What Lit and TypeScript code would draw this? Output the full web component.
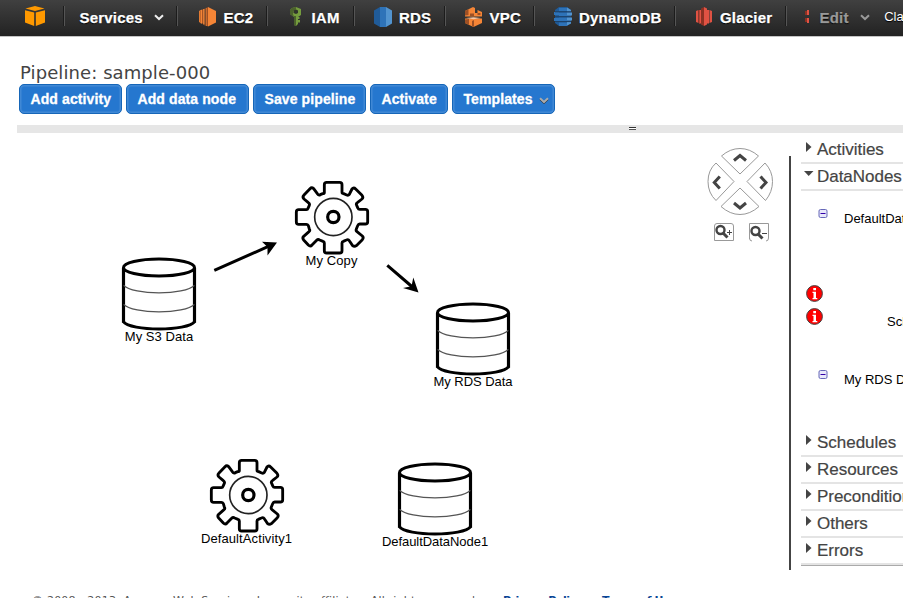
import { LitElement, html, css, svg } from "lit";
import { customElement, property } from "lit/decorators.js";
import { styleMap } from "lit/directives/style-map.js";

const chevron = (color: string, under = "none") => html`<svg width="10" height="7" viewBox="0 0 10 7">
  <path d="M1 2.200L5 6L9 2.200" fill="none" stroke=${under} stroke-width="1.500" />
  <path d="M1 1.2L5 5L9 1.2" fill="none" stroke=${color} stroke-width="2" />
</svg>`;

const icons: Record<string, unknown> = {
  ec2: svg`<path d="M0 4L3 2.5V16.500L0 15z" fill="#f58536"/><path d="M1.300 3.500v12M3.500 2.500v14M6 1.500v17" stroke="#9d5025" stroke-width="1"/>
    <path d="M2.400 3v13.500M4.800 2v15.500M7.500 1v18" stroke="#f58536" stroke-width="1.400"/><path d="M9 0L17 4V15.500L9 19.500z" fill="#f58536"/><path d="M7.500 0.800L9 0V19.500L7.500 18.800z" fill="#9d5025"/>`,
  iam: svg`<path d="M2 1L6 0L11 2V8L8 10V17L6 19L4 18V10L0 7V3z" fill="#759c3e"/><path d="M0 3L2 1L6 0V2.500L3 4V7L4 10L0 7zM6 9L4 9V18L6 19z" fill="#4b612c"/><path d="M3.500 3.500L6 2.500L8 3.500V6L6 7L3.500 6z" fill="#30332b"/><path d="M8 10h1.500v2H8zM8 13h2v2.500H8z" fill="#759c3e"/>`,
  rds: svg`<path d="M0 3.500L6 0V20L0 16.500z" fill="#205b98"/><path d="M6 0H12V20H6z" fill="#2e73b8"/><path d="M12 0L18 3.500V16.500L12 20z" fill="#5294cf"/>`,
  vpc: svg`<path d="M0 4L8 0L10 1V6H12.500V3L17 5V9.500H0z" fill="#f58536"/><path d="M0 4L3.500 2.300V8L0 8.500zM5 6.500h4v2.500H5zM12.500 6h3v2h-3z" fill="#9d5025"/><path d="M0 11.500H17V16L8.500 20L0 16z" fill="#f58536"/><path d="M0 12.500L4 12V18L0 16zM7 14l2-1v7l-2-1z" fill="#9d5025"/><path d="M1 11L8.500 12.200L16 11L8.500 10.200z" fill="#fac9a6"/>`,
  dynamo: svg`<path d="M1 3L5 0H13L17 3V16L13 19H5L1 16z" fill="#205b98"/>
    <path d="M0 5H5V8H0zM0 11H5V14H0zM5 1H13V4H5z" fill="#2e73b8"/><path d="M5 5.500H13V9H5zM5 10.500H13V14H5zM5 15.500H13V19H5z" fill="#2e73b8"/>
    <path d="M13 0.500L17 3V4.500H13zM13 5.500H18V8.500H13zM13 10.500H18V13.500H13zM13 15H17V16.500L13 18.500z" fill="#5294cf"/>
    <path d="M1 4.800H17M1 9.700H17M1 14.600H17" stroke="#1d3f63" stroke-width="1"/>`,
  glacier: svg`<path d="M0 4L2.500 3V16L0 15zM3 3h2.500v13.500H3zM11 3h2v13.500h-2zM13.500 3L16 4V15L13.500 16z" fill="#e05243"/><path d="M2.500 3h1v13h-1z" fill="#8c3123"/><path d="M5 1.500L8 0V19L5 17.500z" fill="#8c3123"/><path d="M8 0L11 1.500V17.500L8 19z" fill="#e05243"/>`,
  mini: svg`<path d="M0 1h2v4H0zM0 8h2v4H0z" fill="#8c3123"/><path d="M2 0h2v5H2zM2 8h2v5H2z" fill="#e05243"/>`,
};

interface NavItem { icon: string; label: string; w: number; iw: number; pad: number; gap: number }
const navItems: NavItem[] = [
  { icon: "ec2", label: "EC2", w: 90, iw: 17, pad: 21, gap: 7.500 },
  { icon: "iam", label: "IAM", w: 87, iw: 12, pad: 22, gap: 9.500 },
  { icon: "rds", label: "RDS", w: 91, iw: 18, pad: 19, gap: 7 },
  { icon: "vpc", label: "VPC", w: 89, iw: 17, pad: 19, gap: 7.500 },
  { icon: "dynamo", label: "DynamoDB", w: 141, iw: 18, pad: 18.500, gap: 7.500 },
  { icon: "glacier", label: "Glacier", w: 111, iw: 16, pad: 19.500, gap: 8.500 },
];

@customElement("console-nav")
export class ConsoleNav extends LitElement {
  static styles = css`
    :host { display: flex; height: 36px; flex: none; overflow: hidden; border-bottom: 1px solid #c4c4c4;
      background: linear-gradient(#404040, #222); color: #fff; font: bold 15px "Liberation Sans", Arial, sans-serif; letter-spacing: .2px;
      -webkit-text-stroke: .25px; text-shadow: 0 1px 1px #000; }
    .cell { box-sizing: border-box; flex: none; height: 36px; display: flex; align-items: center; position: relative; white-space: nowrap; padding-bottom: 2px; }
    .cell.ruled::after { content: ""; position: absolute; right: 0; top: 6px; width: 1px; height: 20px; background: #555; border-left: 1px solid #1c1c1c; }
    .logo { width: 65px; padding: 0 0 4px 25px; }
    .services { width: 113px; padding-left: 14.500px; gap: 11px; }
    .edit { padding-left: 17.500px; color: #999; gap: 11px; }
    .edit .label { margin-left: -1px; }
    .user { padding: 0 0 4px 14.500px; font-weight: normal; font-size: 13px; letter-spacing: 0; -webkit-text-stroke: 0; }
    .label { padding-top: 1px; }
    .icon { overflow: visible; margin-bottom: 1px; flex: none; }
  `;
  render() {
    return html`
      <div class="cell logo ruled"><svg width="20" height="20" viewBox="0 0 20 20">
        <path d="M0.500 2.500L10 0L19.500 2.500L10 5z" fill="#ff9900"/><path d="M0 4.200L9.200 6.600V20L0 16.500zM20 4.200L10.800 6.600V20L20 16.500z" fill="#ff9900"/></svg></div>
      <div class="cell services ruled"><span class="label">Services</span>${chevron("#eee")}</div>
      ${navItems.map((n) => html`<div class="cell ruled" style=${styleMap({ width: `${n.w}px`, paddingLeft: `${n.pad}px`, gap: `${n.gap}px` })}>
        <svg class="icon" width=${n.iw} height="20">${icons[n.icon]}</svg><span class="label">${n.label}</span></div>`)}
      <div class="cell edit"><svg class="icon" width="5" height="13">${icons.mini}</svg><span class="label">Edit</span>${chevron("#999")}</div>
      <div class="cell user">Classmethod</div>`;
  }
}

@customElement("pipeline-node")
export class PipelineNode extends LitElement {
  @property() kind = "data";
  @property() label = "";
  static styles = css`
    :host { display: flex; flex-direction: column; align-items: center; width: 74px; }
    svg { display: block; flex: none; overflow: visible; }
    .name { white-space: nowrap; line-height: 15px; margin-top: -2px; }
    .name.activity { margin-top: -1px; }
  `;
  render() {
    const gear = svg`<g fill="none" stroke="#000" stroke-linejoin="round">
      <path stroke-width="8.500" d="M88 35V11Q88 4 95 4H134Q141 4 141 11V34Q141 38 146 38L155 42Q160 44 163 40L171 24Q176 18 182 24L201 43Q206 49 201 54L188 64Q182 68 185 73L189 82Q190 85 194 85H211Q218 85 218 92V122Q218 129 211 129H194Q190 129 188 134L184 144Q182 149 186 152L202 165Q207 170 202 176L184 194Q178 198 172 193L163 179Q160 174 154 177L145 181Q141 182 141 186V209Q141 216 134 216H95Q88 216 88 209V186Q88 182 84 181L74 177Q69 174 65 178L51 192Q46 198 40 192L26 177Q21 171 26 166L42 152Q46 149 43 144L40 134Q38 130 34 130H11Q4 130 4 123V93Q4 86 11 86H34Q38 86 39 82L43 73Q45 69 40 65L27 54Q21 48 27 42L45 23Q50 18 56 23L67 38Q71 44 76 41L83 38Q88 38 88 35Z"/>
      <circle cx="115" cy="108" r="56" stroke-width="5" stroke="#222"/><circle cx="115" cy="108" r="17" stroke-width="9.500"/></g>`;
    const cylinder = svg`<g fill="none" stroke="#000">
      <ellipse cx="111" cy="28.500" rx="106.500" ry="25.500" stroke-width="9"/>
      <path stroke-width="9.500" d="M4.500 29V194M217.500 29V194"/>
      <path stroke-width="9" d="M4 191C24 220 198 220 218 191"/>
      <path stroke-width="4" stroke="#555" d="M5 82C32 112 190 112 217 82M5 139C32 169 190 169 217 139"/></g>`;
    return html`<svg width="74" height="73" viewBox="0 0 222 219">${this.kind === "activity" ? gear : cylinder}</svg>
      <span class="name ${this.kind}">${this.label}</span>`;
  }
}

const nodes = [
  { kind: "activity", label: "My Copy", x: 294.500, y: 181, ls: 0.1 },
  { kind: "data", label: "My S3 Data", x: 122, y: 258, ls: 0.050 },
  { kind: "data", label: "My RDS Data", x: 436, y: 303, ls: -0.050 },
  { kind: "activity", label: "DefaultActivity1", x: 209.500, y: 459, ls: 0.100 },
  { kind: "data", label: "DefaultDataNode1", x: 398, y: 463, ls: -0.050 },
];

@customElement("pipeline-canvas")
export class PipelineCanvas extends LitElement {
  static styles = css`
    :host { position: relative; display: block; width: 789px; flex: none; }
    pipeline-node, .links, .controls { position: absolute; }
    .links { left: 0; top: 0; }
    .controls { left: 706px; top: 13px; }
  `;
  render() {
    return html`
      <svg class="links" width="789" height="437" viewBox="0 133 789 437">
        <path d="M214.300 270.300L270 245.700M387.300 265.300L413 287.500" stroke="#000" stroke-width="3"/>
        <path d="M277 242.500L262 241.800L267.500 247L267.500 255.500zM418.500 292.500L413.300 277.500L411.500 286.300L403 288z"/>
      </svg>
      ${nodes.map((n) => html`<pipeline-node kind=${n.kind} label=${n.label}
        style=${styleMap({ left: `${n.x}px`, top: `${n.y - 133}px`, letterSpacing: `${n.ls}px` })}></pipeline-node>`)}
      <svg class="controls" width="68" height="100" viewBox="706 146 68 100" fill="none">
        <g stroke="#999"><path d="M721.500 156L740 174L758.500 156Q750 148.500 740 148.500T721.500 156zM721 206.500L740 188L759 206.500Q750 214.500 740 214.500T721 206.500zM716 163L734 181.500L716 200.500Q708 193 708 181.500T716 163zM765 163L747 181.500L765.500 200.500Q772.500 192 772.500 181.500T765 163z"/>
        <path d="M714.500 240.500V226Q714.500 223.500 717 223.500H731Q733.500 223.500 733.500 226V240.500zM749.500 239V223.500H768.500V238Q768.500 241 766 241M749.500 238Q749.500 241 752 241"/></g>
        <g stroke="#444" stroke-width="3"><path d="M734 160.500L740 155.500L746 160.500M734 203L740 208L746 203M719.800 176.500L714.300 182.500L719.800 188.500M760.500 176.500L766 182.500L760.500 188.500"/></g>
        <g stroke="#444" stroke-width="2.400"><circle cx="720.500" cy="230" r="4"/><path d="M723 233L727.500 237.500" stroke-width="3"/><circle cx="755.500" cy="231" r="4"/><path d="M758 234L762.500 238.500" stroke-width="3"/></g>
        <path d="M727 232.500H732M729.500 230V235M762 233.500H767" stroke="#444"/>
      </svg>`;
  }
}

@customElement("object-panel")
export class ObjectPanel extends LitElement {
  static styles = css`
    :host { display: flex; flex: 1; min-width: 0; overflow: hidden; }
    .rule { width: 2px; height: 414px; margin-top: 23px; background: #444; flex: none; }
    .list { width: 300px; flex: none; margin: 4px 0 0 10px; }
    .row { box-sizing: border-box; height: 27px; border-bottom: 2px solid #e4e4e4; display: flex; color: #444; font-size: 17px; line-height: 25px; white-space: nowrap; -webkit-text-stroke: .2px; letter-spacing: -.03px; }
    .row svg { width: 16px; height: 25px; flex: none; }
    .body { height: 239px; display: flex; flex-direction: column; font-size: 13px; line-height: 15px; color: #000; }
    .entry { display: flex; align-items: flex-start; padding-left: 16.500px; gap: 16.500px; white-space: nowrap; }
    .entry svg { flex: none; }
    .entry span { padding-top: 2px; }
    .first { margin-top: 18px; }
    .alert { display: flex; gap: 63px; height: 23px; padding-left: 5px; }
    .alert svg { flex: none; }
    .alert span { padding-top: 6px; }
    .alerts { margin-top: 59px; height: 85px; }
    .end { height: 1px; background: #aaa; }
  `;
  row(name: string, open = false) {
    return html`<div class="row"><svg viewBox="0 0 16 25"><path fill="#444" d=${open ? "M3 7H12.500L7.700 12z" : "M5 5V15L10.500 10z"} /></svg>${name}</div>`;
  }
  toggle() {
    return html`<svg width="10" height="10"><rect x="1" y="0.500" width="8" height="8" rx="1.500" fill="#e8e8fa" stroke="#6668b8"/><path d="M2.500 4.500H7.500" stroke="#30a"/></svg>`;
  }
  warn() {
    return html`<svg width="18" height="18"><circle cx="8.500" cy="8.500" r="7.900" fill="#f00" stroke="#444"/><path d="M7.300 3h2.700v2.200H7.300zM6.500 6.700H10V13h1.300v1.200H6.500V13h1V8h-1z" fill="#fff"/></svg>`;
  }
  render() {
    return html`<div class="rule"></div><div class="list">
      ${this.row("Activities")}${this.row("DataNodes", true)}
      <div class="body">
        <div class="entry first">${this.toggle()}<span>DefaultDataNode1</span></div>
        <div class="alerts"><div class="alert">${this.warn()}</div><div class="alert">${this.warn()}<span>Schedule</span></div></div>
        <div class="entry">${this.toggle()}<span>My RDS Data</span></div>
      </div>
      ${["Schedules", "Resources", "Preconditions", "Others", "Errors"].map((n) => this.row(n))}
      <div class="end"></div></div>`;
  }
}

@customElement("app-root")
export class AppRoot extends LitElement {
  static styles = css`
    :host { display: flex; flex-direction: column; width: 903px; height: 598px; overflow: hidden; background: #fff; color: #000; font: 13px "Liberation Sans", Arial, sans-serif; }
    .title { font: 18px/21px "DejaVu Sans", sans-serif; color: #444; margin: 25px 0 0 20px; height: 22px; letter-spacing: .09px; flex: none; }
    .bar { display: flex; gap: 4px; margin-left: 19px; flex: none; }
    .btn { box-sizing: border-box; height: 30px; border: 1px solid #1666b8; border-radius: 5px; background: #2577cf; box-shadow: inset 0 0 1px 1.500px #4289d5; color: #fff;
      font: bold 14px/28px "Liberation Sans", Arial, sans-serif; letter-spacing: .1px; -webkit-text-stroke: .3px; padding: 0 0 0 10.500px; display: flex; align-items: center; white-space: nowrap; gap: 6px; }
    .btn svg { margin-top: 2px; }
    .splitter { margin: 11px 0 0 17px; height: 8px; background: #e6e6e6; display: flex; flex: none; }
    .grip { width: 7px; height: 1px; border-top: 1px solid #333; border-bottom: 1px solid #555; margin: 2px 0 0 612px; background: #fff; }
    .work { display: flex; height: 437px; flex: none; }
    .foot { flex: none; margin: 24px 0 0 32px; font: 11px/14px "DejaVu Sans", sans-serif; color: #555; white-space: nowrap; display: flex; }
    .copy { width: 471px; letter-spacing: .21px; }
    .link { color: #0a4595; font-weight: bold; letter-spacing: -.5px; }
    .policy { width: 99px; }
  `;
  render() {
    const buttons: [string, number][] = [["Add activity", 103], ["Add data node", 123], ["Save pipeline", 113], ["Activate", 78], ["Templates", 103]];
    return html`<console-nav></console-nav>
      <div class="title">Pipeline: sample-000</div>
      <div class="bar">${buttons.map(([t, w]) => html`<div class="btn" style=${styleMap({ width: `${w}px` })}>${t}${t === "Templates" ? chevron("#aaa", "#222") : ""}</div>`)}</div>
      <div class="splitter"><div class="grip"></div></div>
      <div class="work"><pipeline-canvas></pipeline-canvas><object-panel></object-panel></div>
      <div class="foot"><span class="copy">© 2008 - 2013, Amazon Web Services, Inc. or its affiliates. All rights reserved.</span><span class="link policy">Privacy Policy</span><span class="link">Terms of Use</span></div>`;
  }
}
